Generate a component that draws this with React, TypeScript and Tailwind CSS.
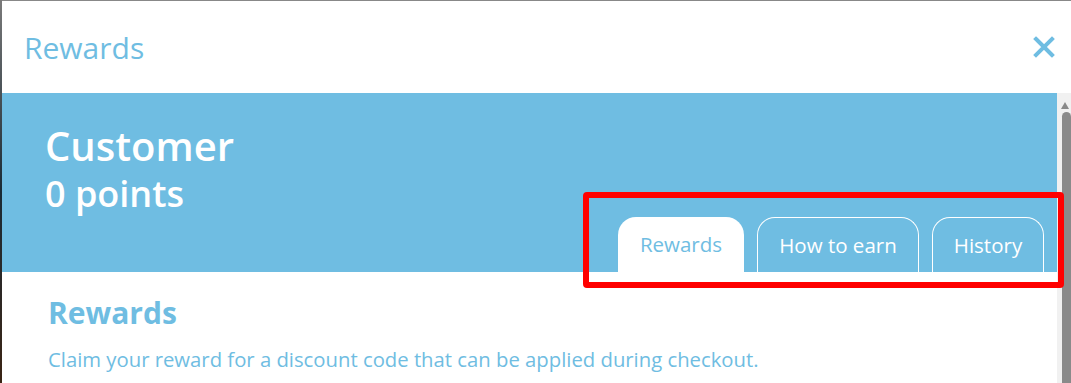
// Rewards modal: header, customer banner with tabs, rewards section.

const font = { fontFamily: '"Open Sans", "Noto Sans", sans-serif' }

function Tab({ label, width, active }: { label: string; width: string; active?: boolean }) {
  return (
    <div
      className={
        active
          ? `${width} h-[55px] flex items-center justify-center rounded-t-[18px] bg-white text-[#6fbde2]`
          : `${width} h-[55px] flex items-center justify-center rounded-t-[18px] border border-b-0 border-white text-white`
      }
    >
      <span className="text-[20.5px] leading-none">{label}</span>
    </div>
  )
}

export default function App() {
  return (
    <div className="relative w-[1071px] h-[383px] overflow-hidden flex bg-white" style={font}>
      <div className="w-[2px] bg-gradient-to-b from-[#7a7a7a] via-[#1a2b35] to-[#3a2414]" />
      <div className="flex-1 flex flex-col border-t border-[#888]">
        <div className="h-[92px] flex items-center justify-between pl-[22px] pr-[16px]">
          <h1 className="text-[30px] text-[#6fbde2] font-normal">Rewards</h1>
          <svg width="22" height="22" viewBox="0 0 22 22" className="text-[#6fbde2]">
            <path d="M3 3 L19 19 M19 3 L3 19" stroke="currentColor" strokeWidth="4" strokeLinecap="square" />
          </svg>
        </div>
        <div className="flex flex-1">
          <div className="flex-1 flex flex-col">
            <div className="h-[179px] bg-[#6fbde2] flex justify-between pl-[43px] pr-[13px]">
              <div className="pt-[29px] text-white font-semibold">
                <div className="text-[40px] leading-[48px]">Customer</div>
                <div className="mt-[4px] text-[36px] leading-[40px]">0 points</div>
              </div>
              <div className="self-end flex gap-[13px]">
                <Tab label="Rewards" width="w-[126px]" active />
                <Tab label="How to earn" width="w-[162px]" />
                <Tab label="History" width="w-[112px]" />
              </div>
            </div>
            <div className="pl-[46px] pt-[23px]">
              <h2 className="text-[30px] font-bold text-[#6fbde2] leading-[36px]">Rewards</h2>
              <p className="mt-[14px] text-[20.3px] leading-[28px] text-[#6fbde2]">
                Claim your reward for a discount code that can be applied during checkout.
              </p>
            </div>
          </div>
          <div className="w-[14px] bg-[#f1f1f1] flex flex-col items-end">
            <svg width="10" height="10" viewBox="0 0 10 10" className="mt-[7px] mr-[1px]">
              <path d="M1 9 L5 2 L9 9 Z" fill="#8a8a8a" />
            </svg>
            <div className="mt-[2px] w-[9px] flex-1 rounded-t-[5px] bg-[#8a8a8a]" />
          </div>
        </div>
      </div>
      <div className="absolute left-[583px] top-[192px] w-[481px] h-[96px] border-[6px] border-[#ff0000] rounded-[4px]" />
    </div>
  )
}
